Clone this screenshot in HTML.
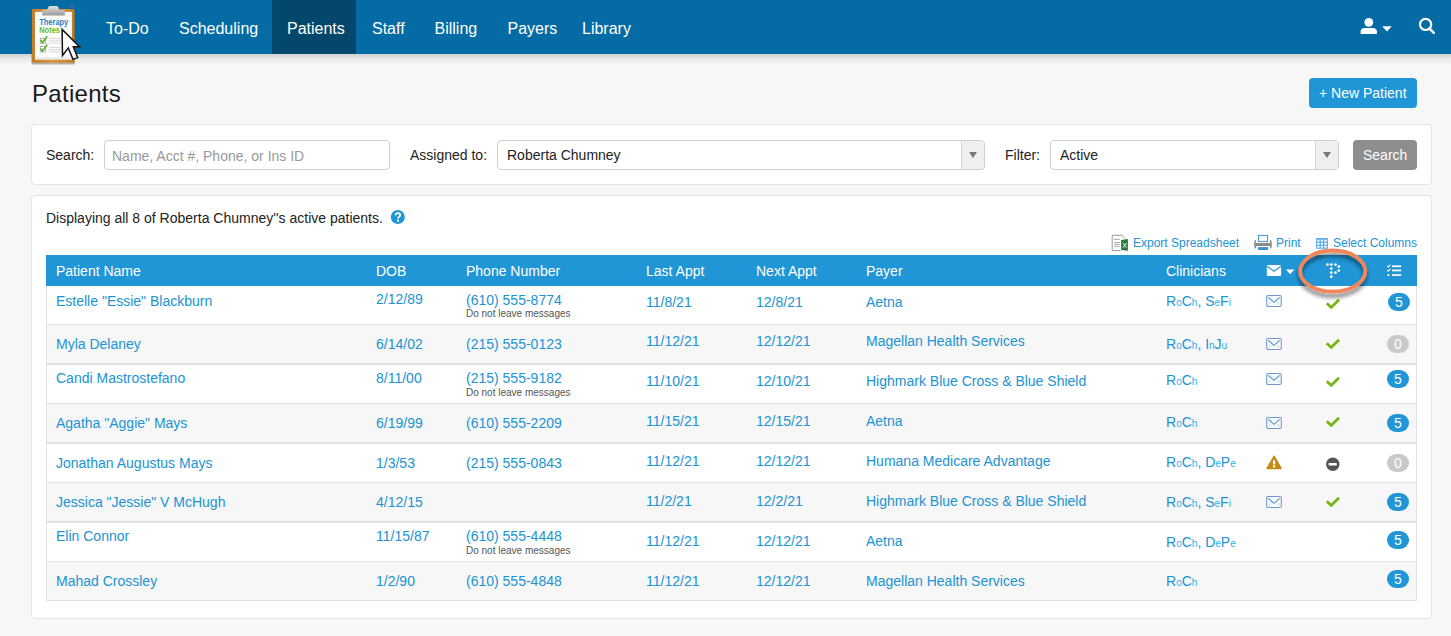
<!DOCTYPE html>
<html><head><meta charset="utf-8">
<style>
*{box-sizing:border-box;margin:0;padding:0}
html,body{width:1451px;height:636px;overflow:hidden;background:#f7f7f7;font-family:"Liberation Sans",sans-serif;font-size:14px;color:#222}
.a{position:absolute;white-space:nowrap;line-height:20px}
#nav{position:absolute;left:0;top:0;width:1451px;height:54px;background:#046ba5}
#navsh{position:absolute;left:0;top:54px;width:1451px;height:11px;background:linear-gradient(rgba(0,0,0,0.16),rgba(0,0,0,0.05) 45%,rgba(0,0,0,0))}
.ni{position:absolute;top:19px;color:#fff;font-size:16px;line-height:20px;white-space:nowrap}
#act{position:absolute;left:272px;top:0;width:84px;height:54px;background:#03486c}
.panel{position:absolute;background:#fff;border:1px solid #e4e4e4;border-radius:4px}
.inp{position:absolute;background:#fff;border:1px solid #cfcfcf;border-radius:4px}
.lbl{color:#222}
.sel-arr{position:absolute;top:0;bottom:0;right:0;width:23px;background:#eef0f0;border-left:1px solid #d7d7d7;border-radius:0 3px 3px 0}
.tri{position:absolute;width:0;height:0;border-left:4px solid transparent;border-right:4px solid transparent;border-top:6px solid #787878}
.lnk{color:#2193d3}
.hd{color:#fff}
.row{position:absolute;left:46px;width:1371px;border-left:1px solid #e2e2e2;border-right:1px solid #e2e2e2}
.msg{position:absolute;white-space:nowrap;font-size:10px;line-height:20px;color:#555}
.cl{position:absolute;white-space:nowrap;line-height:20px;color:#2193d3}
.cl s{text-decoration:none;font-size:10px;color:#2db2ef}
.badge{position:absolute;width:22px;height:18px;border-radius:9px;background:#2196d6;color:#fff;font-size:14px;line-height:18px;text-align:center}
.badge.g{background:#c9c9c9}
</style></head><body>

<div id="nav"></div>
<div id="act"></div>
<div id="navsh"></div>

<!-- logo -->
<svg style="position:absolute;left:0;top:0" width="90" height="70" viewBox="0 0 90 70">
  <defs>
    <linearGradient id="clipg" x1="0" y1="0" x2="0" y2="1"><stop offset="0" stop-color="#e4e4e4"/><stop offset="1" stop-color="#989898"/></linearGradient>
    <linearGradient id="brd" x1="0" y1="0" x2="1" y2="0"><stop offset="0" stop-color="#c47d28"/><stop offset="0.5" stop-color="#d9973e"/><stop offset="1" stop-color="#c47d28"/></linearGradient>
  </defs>
  <text x="68.4" y="7.8" font-size="4.6" fill="#5d6f80" font-family="Liberation Sans" textLength="5.8" lengthAdjust="spacingAndGlyphs">TM</text>
  <rect x="31.5" y="10" width="43.5" height="54.5" rx="1.5" fill="#000" opacity="0.28"/>
  <rect x="31.8" y="9" width="42.8" height="53.8" rx="1.2" fill="url(#brd)"/>
  <rect x="35" y="11.9" width="36.9" height="47.6" fill="#fcfcfc"/>
  <rect x="35" y="57.5" width="36.9" height="2" fill="#e6e6e6"/>
  <path d="M42.2 15.6 L42.2 10.6 Q42.2 10 43 10 L46.5 10 Q47.5 10 48.2 7.6 Q48.7 6 50 6 L56.6 6 Q57.9 6 58.4 7.6 Q59.1 10 60.1 10 L64.1 10 Q64.9 10 64.9 10.6 L64.9 15.6 Z" fill="url(#clipg)"/>
  <g transform="translate(39.2 24.7) scale(0.83 1)"><text x="0" y="0" font-size="9" font-weight="bold" fill="#1c85c7" font-family="Liberation Sans">Therapy</text></g>
  <g transform="translate(39.2 32.7) scale(0.83 1)"><text x="0" y="0" font-size="9" font-weight="bold" fill="#69bd27" font-family="Liberation Sans">Notes</text></g>
  <rect x="40.3" y="38.3" width="5.4" height="5" fill="#fff" stroke="#a8a8a8" stroke-width="0.9"/>
  <rect x="40.3" y="46.5" width="5.4" height="5.4" fill="#fff" stroke="#a8a8a8" stroke-width="0.9"/>
  <path d="M40.6 40 L42.6 42.6 L47.2 36.2" stroke="#5db829" stroke-width="1.7" fill="none"/>
  <path d="M40.6 48.4 L42.6 51 L47.2 44.6" stroke="#5db829" stroke-width="1.7" fill="none"/>
  <path d="M48.6 38.6 H61 M48.6 40.8 H61 M48.6 43 H61 M48.6 47.4 H61 M48.6 49.6 H61 M48.6 51.8 H61" stroke="#d6d6d6" stroke-width="1"/>
  <path d="M62.1 29.4 L62.5 55.5 L68.3 47.9 L73 59.4 L77.7 57.6 L73.3 46.8 L79.5 46.8 Z" fill="#fff" stroke="#111" stroke-width="1.5" stroke-linejoin="miter"/>
</svg>

<div class="ni" style="left:106px">To-Do</div>
<div class="ni" style="left:179px">Scheduling</div>
<div class="ni" style="left:287px">Patients</div>
<div class="ni" style="left:372px">Staff</div>
<div class="ni" style="left:434.5px">Billing</div>
<div class="ni" style="left:507.5px">Payers</div>
<div class="ni" style="left:582px">Library</div>

<!-- user & search icons -->
<svg style="position:absolute;left:1355px;top:12px" width="90" height="30" viewBox="1355 12 90 30">
  <circle cx="1368.8" cy="22.3" r="4.4" fill="#fff"/>
  <path d="M1360.6 34 L1360.6 31.5 Q1360.6 28 1365 28 L1372.5 28 Q1376.9 28 1376.9 31.5 L1376.9 34 Z" fill="#fff"/>
  <path d="M1382.2 26.2 L1391.8 26.2 L1387 31.5 Z" fill="#fff"/>
  <circle cx="1425.6" cy="24.4" r="5.6" fill="none" stroke="#fff" stroke-width="2.2"/>
  <path d="M1429.6 28.6 L1433.8 32.8" stroke="#fff" stroke-width="2.4" stroke-linecap="round"/>
</svg>

<!-- title -->
<div class="a" style="left:32px;top:84px;font-size:24px;line-height:20px;color:#1a1a1a;letter-spacing:0.3px">Patients</div>
<div class="a" style="left:1309px;top:78px;width:108px;height:30px;background:#2196d6;border-radius:4px"></div>
<div class="a" style="left:1319px;top:83px;color:#fff">+ New Patient</div>

<!-- panel 1 -->
<div class="panel" style="left:31px;top:124px;width:1401px;height:61px"></div>
<div class="a lbl" style="left:46px;top:145px">Search:</div>
<div class="inp" style="left:104px;top:140px;width:286px;height:30px"></div>
<div class="a" style="left:112px;top:146px;color:#999">Name, Acct #, Phone, or Ins ID</div>
<div class="a lbl" style="left:410px;top:145px">Assigned to:</div>
<div class="inp" style="left:497px;top:140px;width:488px;height:30px"><div class="sel-arr"><div class="tri" style="left:7px;top:11px"></div></div></div>
<div class="a" style="left:507px;top:145px">Roberta Chumney</div>
<div class="a lbl" style="left:1005px;top:145px">Filter:</div>
<div class="inp" style="left:1050px;top:140px;width:289px;height:30px"><div class="sel-arr"><div class="tri" style="left:7px;top:11px"></div></div></div>
<div class="a" style="left:1060px;top:145px">Active</div>
<div class="a" style="left:1353px;top:140px;width:64px;height:30px;background:#8d8d8d;border-radius:4px"></div>
<div class="a" style="left:1363px;top:145px;color:#fff">Search</div>

<!-- panel 2 -->
<div class="panel" style="left:31px;top:195px;width:1401px;height:424px"></div>
<div class="a" style="left:46px;top:208px">Displaying all 8 of Roberta Chumney''s active patients.</div>
<svg style="position:absolute;left:390px;top:210px" width="16" height="15" viewBox="0 0 16 15">
  <circle cx="7.8" cy="7" r="7" fill="#2196d6"/>
  <path d="M5.6 5.3 Q5.6 3.1 7.9 3.1 Q10.2 3.1 10.2 5.1 Q10.2 6.3 8.9 7 Q8 7.5 8 8.6" fill="none" stroke="#fff" stroke-width="1.8"/>
  <rect x="7" y="9.6" width="2" height="2" fill="#fff"/>
</svg>

<!-- export row -->
<svg style="position:absolute;left:1108px;top:232px" width="170" height="22" viewBox="1108 232 170 22">
  <path d="M1112.2 250.6 V235.3 H1121.8 L1124.7 238.1" fill="none" stroke="#8c8c8c" stroke-width="0.9"/>
  <path d="M1112.2 250.6 H1120.5" fill="none" stroke="#8c8c8c" stroke-width="0.9"/>
  <path d="M1114.1 239.4 H1119.8 M1114.1 242.5 H1119.8 M1114.1 244.4 H1119.8 M1114.1 246.4 H1119.8" stroke="#8c8c8c" stroke-width="0.75"/>
  <path d="M1121.1 239.9 L1127.9 239 V250.8 L1121.1 250 Z" fill="#2a7a3c"/>
  <path d="M1122.9 243 L1126.5 247.7 M1126.5 243 L1122.9 247.7" stroke="#fff" stroke-width="0.9"/>
  <rect x="1258.6" y="235.4" width="9" height="6" fill="#fff" stroke="#3a8fd6" stroke-width="1"/>
  <path d="M1256 240.6 Q1255 241 1255 242.5 V246 Q1255 247.6 1256 248 M1270 240.6 Q1271 241 1271 242.5 V246 Q1271 247.6 1270 248" fill="none" stroke="#8a8a8a" stroke-width="1.6"/>
  <rect x="1255.5" y="243" width="15" height="3" fill="#8a8a8a"/>
  <rect x="1258.1" y="247.1" width="9.9" height="2.9" fill="#3a8fd6"/>
</svg>
<svg style="position:absolute;left:1315px;top:237px" width="14" height="14" viewBox="1315 237 14 14">
  <rect x="1316" y="238" width="12" height="10.8" fill="#68b0e6"/>
  <g fill="#fdfeff">
   <rect x="1317.1" y="239.8" width="2.5" height="1.7"/><rect x="1320.9" y="239.8" width="2" height="1.7"/><rect x="1324.2" y="239.8" width="2.6" height="1.7"/>
   <rect x="1317.1" y="242.9" width="2.5" height="1.7"/><rect x="1320.9" y="242.9" width="2" height="1.7"/><rect x="1324.2" y="242.9" width="2.6" height="1.7"/>
   <rect x="1317.1" y="245.9" width="2.5" height="1.7"/><rect x="1320.9" y="245.9" width="2" height="1.7"/><rect x="1324.2" y="245.9" width="2.6" height="1.7"/>
  </g>
</svg>
<div class="a lnk" style="left:1133px;top:233px;font-size:12px">Export Spreadsheet</div>
<div class="a lnk" style="left:1276px;top:233px;font-size:12px">Print</div>
<div class="a lnk" style="left:1333px;top:233px;font-size:12px">Select Columns</div>

<!-- table header -->
<div class="a" style="left:46px;top:255px;width:1371px;height:31px;background:#2196d6"></div>
<div class="a hd" style="left:56px;top:261px">Patient Name</div>
<div class="a hd" style="left:376px;top:261px">DOB</div>
<div class="a hd" style="left:466px;top:261px">Phone Number</div>
<div class="a hd" style="left:646px;top:261px">Last Appt</div>
<div class="a hd" style="left:756px;top:261px">Next Appt</div>
<div class="a hd" style="left:866px;top:261px">Payer</div>
<div class="a hd" style="left:1166px;top:261px">Clinicians</div>
<svg style="position:absolute;left:1260px;top:258px" width="150" height="26" viewBox="1260 258 150 26">
  <rect x="1266.8" y="265" width="14.3" height="11" rx="1.2" fill="#fff"/>
  <path d="M1267 266.2 L1274 271.2 L1281 266.2" fill="none" stroke="#2196d6" stroke-width="1.1"/>
  <path d="M1286 269.6 L1294.3 269.6 L1290.15 274.3 Z" fill="#fff"/>
  <g fill="#fff">
    <circle cx="1327.5" cy="264.6" r="1.35"/><circle cx="1331.3" cy="264.6" r="1.35"/><circle cx="1335.5" cy="264.6" r="1.35"/>
    <circle cx="1338.8" cy="266.6" r="1.35"/><circle cx="1331.3" cy="268.5" r="1.35"/><circle cx="1338.8" cy="270.6" r="1.35"/>
    <circle cx="1331.3" cy="272.6" r="1.35"/><circle cx="1335.5" cy="272.6" r="1.35"/><circle cx="1331.3" cy="276.7" r="1.35"/>
  </g>
  <path d="M1387.2 266 L1388.2 267 L1390.4 264.6 M1387.2 270.2 L1388.2 271.2 L1390.4 268.8" fill="none" stroke="#fff" stroke-width="1.1"/>
  <circle cx="1388.4" cy="275.1" r="1.1" fill="#fff"/>
  <rect x="1392" y="265.4" width="9.2" height="1.7" fill="#fff"/>
  <rect x="1392" y="269.6" width="9.2" height="1.7" fill="#fff"/>
  <rect x="1392" y="274.2" width="9.2" height="1.7" fill="#fff"/>
</svg>

<!-- rows -->
<div id="rows">
<div class="row" style="top:286px;height:39px;background:#fff;border-bottom:1px solid #e2e2e2"></div>
<div class="row" style="top:325px;height:40px;background:#f7f7f7;border-bottom:2px solid #e2e2e2"></div>
<div class="row" style="top:365px;height:39px;background:#fff;border-bottom:1px solid #e2e2e2"></div>
<div class="row" style="top:404px;height:40px;background:#f7f7f7;border-bottom:2px solid #e2e2e2"></div>
<div class="row" style="top:444px;height:39px;background:#fff;border-bottom:1px solid #e2e2e2"></div>
<div class="row" style="top:483px;height:40px;background:#f7f7f7;border-bottom:2px solid #e2e2e2"></div>
<div class="row" style="top:523px;height:39px;background:#fff;border-bottom:1px solid #e2e2e2"></div>
<div class="row" style="top:562px;height:39px;background:#f7f7f7;border-bottom:1px solid #e2e2e2"></div>
<div class="a lnk" style="left:56px;top:291px">Estelle "Essie" Blackburn</div>
<div class="a lnk" style="left:376px;top:289px">2/12/89</div>
<div class="a lnk" style="left:466px;top:289.5px">(610) 555-8774</div>
<div class="msg" style="left:466px;top:303.5px">Do not leave messages</div>
<div class="a lnk" style="left:646px;top:291.5px">11/8/21</div>
<div class="a lnk" style="left:756px;top:291.5px">12/8/21</div>
<div class="a lnk" style="left:866px;top:291.5px">Aetna</div>
<div class="cl" style="left:1166px;top:291px">R<s>o</s>C<s>h</s>, S<s>e</s>F<s>i</s></div>
<svg class="ic" style="position:absolute;left:1265px;top:294px" width="18" height="14" viewBox="0 0 18 14"><rect x="1.7" y="1.5" width="14.6" height="10.9" rx="1.3" fill="#f9f9f9" stroke="#6f97d0" stroke-width="1.05"/><path d="M3.3 3.3 L9 8.3 L14.7 3.3" fill="none" stroke="#4a95d2" stroke-width="1.05"/><path d="M3.4 10.5 L5.6 8.3 M12.4 8.3 L14.6 10.5" fill="none" stroke="#9dd0ea" stroke-width="0.9"/></svg>
<svg style="position:absolute;left:1324px;top:296.6px" width="18" height="14" viewBox="0 0 18 14"><path d="M2.8 6.3 L7.2 10.4 L15 2.7" fill="none" stroke="#74b512" stroke-width="2.8"/></svg>
<div class="badge" style="left:1388px;top:293px">5</div>
<div class="a lnk" style="left:56px;top:334px">Myla Delaney</div>
<div class="a lnk" style="left:376px;top:334px">6/14/02</div>
<div class="a lnk" style="left:466px;top:334px">(215) 555-0123</div>
<div class="a lnk" style="left:646px;top:331px">11/12/21</div>
<div class="a lnk" style="left:756px;top:331px">12/12/21</div>
<div class="a lnk" style="left:866px;top:331px">Magellan Health Services</div>
<div class="cl" style="left:1166px;top:334px">R<s>o</s>C<s>h</s>, I<s>n</s>J<s>u</s></div>
<svg class="ic" style="position:absolute;left:1265px;top:337px" width="18" height="14" viewBox="0 0 18 14"><rect x="1.7" y="1.5" width="14.6" height="10.9" rx="1.3" fill="#f9f9f9" stroke="#6f97d0" stroke-width="1.05"/><path d="M3.3 3.3 L9 8.3 L14.7 3.3" fill="none" stroke="#4a95d2" stroke-width="1.05"/><path d="M3.4 10.5 L5.6 8.3 M12.4 8.3 L14.6 10.5" fill="none" stroke="#9dd0ea" stroke-width="0.9"/></svg>
<svg style="position:absolute;left:1324px;top:336.8px" width="18" height="14" viewBox="0 0 18 14"><path d="M2.8 6.3 L7.2 10.4 L15 2.7" fill="none" stroke="#74b512" stroke-width="2.8"/></svg>
<div class="badge g" style="left:1387px;top:335px">0</div>
<div class="a lnk" style="left:56px;top:368px">Candi Mastrostefano</div>
<div class="a lnk" style="left:376px;top:368px">8/11/00</div>
<div class="a lnk" style="left:466px;top:368px">(215) 555-9182</div>
<div class="msg" style="left:466px;top:382.5px">Do not leave messages</div>
<div class="a lnk" style="left:646px;top:371px">11/10/21</div>
<div class="a lnk" style="left:756px;top:371px">12/10/21</div>
<div class="a lnk" style="left:866px;top:371px">Highmark Blue Cross &amp; Blue Shield</div>
<div class="cl" style="left:1166px;top:370px">R<s>o</s>C<s>h</s></div>
<svg class="ic" style="position:absolute;left:1265px;top:372px" width="18" height="14" viewBox="0 0 18 14"><rect x="1.7" y="1.5" width="14.6" height="10.9" rx="1.3" fill="#f9f9f9" stroke="#6f97d0" stroke-width="1.05"/><path d="M3.3 3.3 L9 8.3 L14.7 3.3" fill="none" stroke="#4a95d2" stroke-width="1.05"/><path d="M3.4 10.5 L5.6 8.3 M12.4 8.3 L14.6 10.5" fill="none" stroke="#9dd0ea" stroke-width="0.9"/></svg>
<svg style="position:absolute;left:1324px;top:374.6px" width="18" height="14" viewBox="0 0 18 14"><path d="M2.8 6.3 L7.2 10.4 L15 2.7" fill="none" stroke="#74b512" stroke-width="2.8"/></svg>
<div class="badge" style="left:1387px;top:370px">5</div>
<div class="a lnk" style="left:56px;top:413px">Agatha "Aggie" Mays</div>
<div class="a lnk" style="left:376px;top:413px">6/19/99</div>
<div class="a lnk" style="left:466px;top:413px">(610) 555-2209</div>
<div class="a lnk" style="left:646px;top:411px">11/15/21</div>
<div class="a lnk" style="left:756px;top:411px">12/15/21</div>
<div class="a lnk" style="left:866px;top:411px">Aetna</div>
<div class="cl" style="left:1166px;top:412px">R<s>o</s>C<s>h</s></div>
<svg class="ic" style="position:absolute;left:1265px;top:415.6px" width="18" height="14" viewBox="0 0 18 14"><rect x="1.7" y="1.5" width="14.6" height="10.9" rx="1.3" fill="#f9f9f9" stroke="#6f97d0" stroke-width="1.05"/><path d="M3.3 3.3 L9 8.3 L14.7 3.3" fill="none" stroke="#4a95d2" stroke-width="1.05"/><path d="M3.4 10.5 L5.6 8.3 M12.4 8.3 L14.6 10.5" fill="none" stroke="#9dd0ea" stroke-width="0.9"/></svg>
<svg style="position:absolute;left:1324px;top:415px" width="18" height="14" viewBox="0 0 18 14"><path d="M2.8 6.3 L7.2 10.4 L15 2.7" fill="none" stroke="#74b512" stroke-width="2.8"/></svg>
<div class="badge" style="left:1387px;top:414px">5</div>
<div class="a lnk" style="left:56px;top:453px">Jonathan Augustus Mays</div>
<div class="a lnk" style="left:376px;top:453px">1/3/53</div>
<div class="a lnk" style="left:466px;top:453px">(215) 555-0843</div>
<div class="a lnk" style="left:646px;top:451px">11/12/21</div>
<div class="a lnk" style="left:756px;top:451px">12/12/21</div>
<div class="a lnk" style="left:866px;top:451px">Humana Medicare Advantage</div>
<div class="cl" style="left:1166px;top:452px">R<s>o</s>C<s>h</s>, D<s>e</s>P<s>e</s></div>
<svg style="position:absolute;left:1265px;top:453.6px" width="18" height="16" viewBox="0 0 18 16"><path d="M9.1 2.1 L16.3 14.5 L1.9 14.5 Z" fill="#c18b14" stroke="#c18b14" stroke-width="1.3" stroke-linejoin="round"/><rect x="8" y="6.4" width="2.2" height="4" fill="#fff"/><rect x="8" y="11.3" width="2.2" height="2.1" fill="#fff"/></svg>
<svg style="position:absolute;left:1324px;top:455.9px" width="16" height="16" viewBox="0 0 16 16"><circle cx="8.8" cy="8.2" r="6.7" fill="#555"/><rect x="4.6" y="7.1" width="8.2" height="2.3" rx="0.4" fill="#fff"/></svg>
<div class="badge g" style="left:1387px;top:454px">0</div>
<div class="a lnk" style="left:56px;top:492px">Jessica "Jessie" V McHugh</div>
<div class="a lnk" style="left:376px;top:492px">4/12/15</div>
<div class="a lnk" style="left:646px;top:491px">11/2/21</div>
<div class="a lnk" style="left:756px;top:491px">12/2/21</div>
<div class="a lnk" style="left:866px;top:491px">Highmark Blue Cross &amp; Blue Shield</div>
<div class="cl" style="left:1166px;top:492px">R<s>o</s>C<s>h</s>, S<s>e</s>F<s>i</s></div>
<svg class="ic" style="position:absolute;left:1265px;top:495px" width="18" height="14" viewBox="0 0 18 14"><rect x="1.7" y="1.5" width="14.6" height="10.9" rx="1.3" fill="#f9f9f9" stroke="#6f97d0" stroke-width="1.05"/><path d="M3.3 3.3 L9 8.3 L14.7 3.3" fill="none" stroke="#4a95d2" stroke-width="1.05"/><path d="M3.4 10.5 L5.6 8.3 M12.4 8.3 L14.6 10.5" fill="none" stroke="#9dd0ea" stroke-width="0.9"/></svg>
<svg style="position:absolute;left:1324px;top:495.4px" width="18" height="14" viewBox="0 0 18 14"><path d="M2.8 6.3 L7.2 10.4 L15 2.7" fill="none" stroke="#74b512" stroke-width="2.8"/></svg>
<div class="badge" style="left:1387px;top:493px">5</div>
<div class="a lnk" style="left:56px;top:526px">Elin Connor</div>
<div class="a lnk" style="left:376px;top:526px">11/15/87</div>
<div class="a lnk" style="left:466px;top:526px">(610) 555-4448</div>
<div class="msg" style="left:466px;top:540.5px">Do not leave messages</div>
<div class="a lnk" style="left:646px;top:531px">11/12/21</div>
<div class="a lnk" style="left:756px;top:531px">12/12/21</div>
<div class="a lnk" style="left:866px;top:531px">Aetna</div>
<div class="cl" style="left:1166px;top:532px">R<s>o</s>C<s>h</s>, D<s>e</s>P<s>e</s></div>
<div class="badge" style="left:1387px;top:531px">5</div>
<div class="a lnk" style="left:56px;top:571px">Mahad Crossley</div>
<div class="a lnk" style="left:376px;top:571px">1/2/90</div>
<div class="a lnk" style="left:466px;top:571px">(610) 555-4848</div>
<div class="a lnk" style="left:646px;top:571px">11/12/21</div>
<div class="a lnk" style="left:756px;top:571px">12/12/21</div>
<div class="a lnk" style="left:866px;top:571px">Magellan Health Services</div>
<div class="cl" style="left:1166px;top:571px">R<s>o</s>C<s>h</s></div>
<div class="badge" style="left:1387px;top:570px">5</div>
</div>
<svg style="position:absolute;left:1280px;top:235px" width="110" height="80" viewBox="1280 235 110 80">
  <defs><filter id="sh" x="-30%" y="-30%" width="160%" height="170%"><feGaussianBlur in="SourceAlpha" stdDeviation="2.2"/><feOffset dx="0" dy="3.5" result="b"/><feComponentTransfer><feFuncA type="linear" slope="0.55"/></feComponentTransfer><feMerge><feMergeNode/><feMergeNode in="SourceGraphic"/></feMerge></filter></defs>
  <ellipse cx="1332.7" cy="271.1" rx="32.6" ry="20.6" fill="none" stroke="#f0865c" stroke-width="3.8" filter="url(#sh)"/>
</svg>
</body></html>
